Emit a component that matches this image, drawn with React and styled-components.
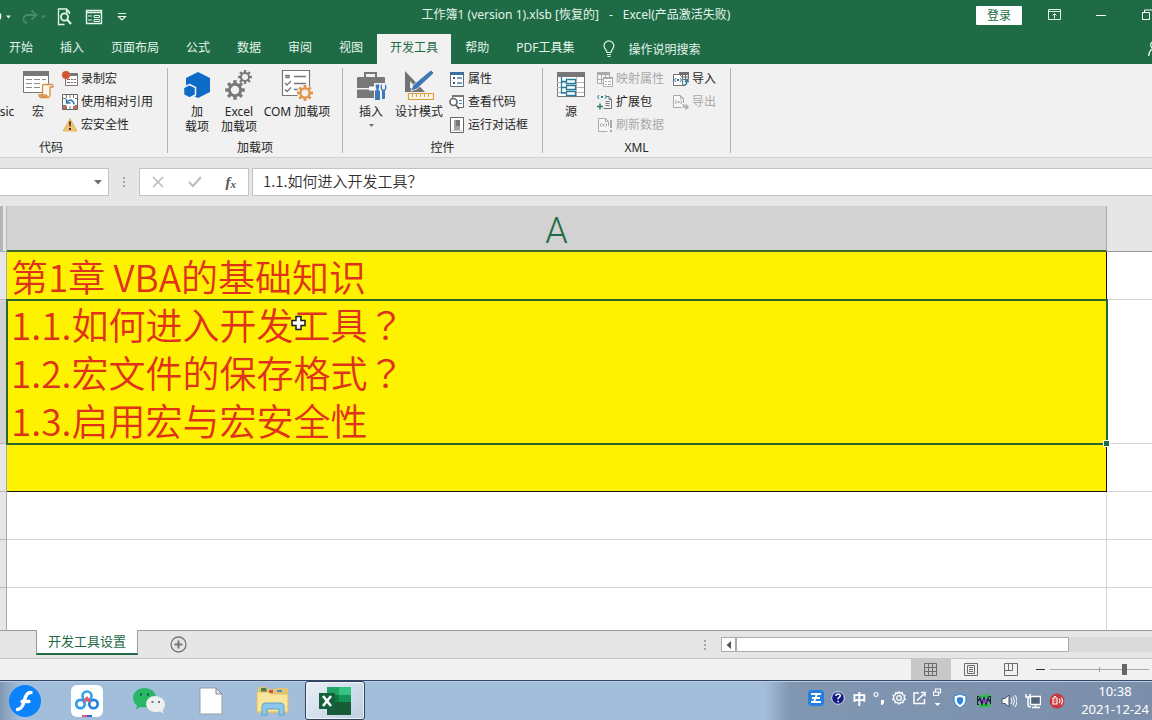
import * as React from 'react';
import styled, { createGlobalStyle, css } from 'styled-components';

const GREEN = '#1e6b45';

const GlobalStyle = createGlobalStyle`
  * {
    box-sizing: border-box;
  }

  body {
    margin: 0;
    overflow: hidden;
    font-family: "Noto Sans", "Noto Sans CJK SC", sans-serif;
    font-size: 12px;
    line-height: 15px;
    color: #262626;
  }

  button, input {
    font: inherit;
    color: inherit;
    margin: 0;
    padding: 0;
    border: 0;
    background: none;
  }

  svg {
    display: block;
    flex-shrink: 0;
  }
`;

/* ---------- quick access and window icons ---------- */

const UndoIcon = () => (
  <svg width="12" height="16" viewBox="0 0 12 16" fill="none">
    <path d="M0 4.500q1.500 3-.5 6" stroke="#fff" strokeWidth="1.500" />
    <path d="M6 6.500h5l-2.500 3z" fill="#e4f5ec" />
  </svg>
);

const RedoIcon = () => (
  <svg width="26" height="16" viewBox="0 0 26 16" fill="none">
    <path d="M5 14q-4-1-3.500-4.500T6 6h8M9.500 1.500 14.500 6l-5 4.500" stroke="#478a68" strokeWidth="1.800" />
    <path d="M19 6.500h5l-2.500 3z" fill="#478a68" />
  </svg>
);

const PreviewIcon = () => (
  <svg width="16" height="18" viewBox="0 0 16 18" fill="none" stroke="#e4f5ec" strokeWidth="1.300">
    <path d="M12.500 6V4L9.500 1H1.500v15.500h6M9.500 1v3h3" />
    <circle cx="7.500" cy="9" r="3.600" strokeWidth="1.800" />
    <path d="m10 11.500 4 4.500" strokeWidth="2.200" />
  </svg>
);

const FormIcon = () => (
  <svg width="18" height="16" viewBox="0 0 18 16" fill="none" stroke="#e4f5ec">
    <path d="M1.500 1.500h15v13h-15zM1 3.500h16" strokeWidth="1.400" />
    <path d="M3 7h4M3 11h4M9 6.500h5.500v2H9zM9 10.500h5.500v2H9z" />
  </svg>
);

const CustomizeIcon = () => (
  <svg width="10" height="10" viewBox="0 0 10 10" fill="none" stroke="#e4f5ec" strokeWidth="1.200">
    <path d="M1 1.500h8M1.500 4.500h7L5 8z" />
  </svg>
);

const RibbonToggleIcon = () => (
  <svg width="14" height="12" viewBox="0 0 14 12" fill="none" stroke="#e4f5ec">
    <path d="M.5.500h12v10H.5zM.5 2.500h12M6.500 9.500V5M4.500 6.500l2-2 2 2" />
  </svg>
);

const MinimizeIcon = () => (
  <svg width="12" height="12" viewBox="0 0 12 12" stroke="#fff">
    <path d="M1 6.500h10" />
  </svg>
);

const RestoreIcon = () => (
  <svg width="10" height="12" viewBox="0 0 10 12" fill="none" stroke="#fff">
    <path d="M.5 3.500h7v7h-7zM2.500 3V1H12" />
  </svg>
);

const BulbIcon = () => (
  <svg width="14" height="18" viewBox="0 0 14 18" fill="none" stroke="#e4f5ec" strokeWidth="1.200">
    <path d="M5 12.500C5 10 2 9 2 5.800a4.900 4.900 0 0 1 9.800 0C11.800 9 9 10 9 12.500zM5 14.500h4M5.500 16.500h3" />
  </svg>
);

const PersonIcon = () => (
  <svg width="4" height="16" viewBox="0 0 4 16" fill="none" stroke="#e4f5ec" strokeWidth="1.300">
    <path d="M4 1Q1.500 4 4 7M4 8Q1 10 .7 15" />
  </svg>
);

/* ---------- ribbon icons ---------- */

const MacroIcon = () => (
  <svg width="32" height="32" viewBox="0 0 32 32" fill="none">
    <path d="M1.500 2.500h25v21h-25z" fill="#fff" stroke="#777" />
    <path d="M1 2h26v5H1z" fill="#777" />
    <path d="M4 10.500h6M12 10.500h6M20 10.500h4M4 14.500h6M12 14.500h6M4 18.500h6M12 18.500h6" stroke="#8d8d8d" />
    <path d="M20.500 17q0-1.500 1.500-1.500h8q1 .5 1 2.500h-3v8.500q-.3 2-2 2h-7.500q-1.500-.5-1.500-2.500h3.500z" fill="#fdf6ee" stroke="#d98b42" strokeWidth="1.300" />
    <path d="M17.500 25.500h7.500q.5 1.500 1 3h-7z" fill="#dd9450" />
  </svg>
);

const RecordIcon = () => (
  <svg width="16" height="16" viewBox="0 0 16 16" fill="none">
    <path d="M3.500 2.500h12v12h-12z" fill="#fff" stroke="#777" />
    <path d="M8 2h8v3H8z" fill="#777" />
    <path d="M5 8.500h3M9 8.500h2M12 8.500h2M5 11.500h3M9 11.500h2M12 11.500h2" stroke="#8b5f5a" />
    <circle cx="4" cy="4" r="4" fill="#d35230" />
  </svg>
);

const RelativeIcon = () => (
  <svg width="16" height="16" viewBox="0 0 16 16" fill="none">
    <path d="M.5.500h15v15H.5z" fill="#fff" stroke="#666" />
    <path d="M.5 4.500h15M.5 11.500h15M4.500.500v15M11.500.500v15M8 1v3M8 12v3" stroke="#777" />
    <path d="M4 4h9v8H4z" fill="#fff" />
    <path d="M5 8.500q4-6 7.500 2M4.500 5v4h4" stroke="#3b78b8" strokeWidth="1.500" />
    <path d="M1 12h3v3H1zM12 12h3v3h-3z" fill="#c56d50" />
  </svg>
);

const WarningIcon = () => (
  <svg width="16" height="16" viewBox="0 0 16 16">
    <path d="M8 1.500 15 14H1z" fill="#f2c274" stroke="#e8b565" strokeLinejoin="round" />
    <path d="M7 4.500h2l-.4 5H7.400zM7 11h2v2H7z" fill="#3a3226" />
  </svg>
);

const AddinIcon = () => (
  <svg width="30" height="32" viewBox="0 0 30 32">
    <path d="m16 3 12 6v14l-12 6-12-6V9z" fill="#0d6ac6" />
    <path d="m7.500 15.500 6 3v7.500l-6 3-6-3v-7.500z" fill="#0d6ac6" stroke="#f1f1f1" strokeWidth="1.500" />
  </svg>
);

const gearTeeth = [0, 45, 90, 135, 180, 225, 270, 315];

const Gear = ({ cx, cy, r, color }) => (
  <g transform={ `translate(${cx} ${cy})` } fill={ color }>
    {gearTeeth.map(angle => (
      <rect key={ angle } x={ -r * 0.17 } y={ -r } width={ r * 0.34 } height={ r * 0.4 } transform={ `rotate(${angle})` }/>
    ))}
    <circle r={ r * 0.58 } fill="none" stroke={ color } strokeWidth={ r * 0.3 }/>
  </g>
);

const ExcelAddinIcon = () => (
  <svg width="32" height="32" viewBox="0 0 32 32">
    <Gear cx={ 12 } cy={ 21 } r={ 9.800 } color="#797979"/>
    <Gear cx={ 22 } cy={ 8 } r={ 7 } color="#797979"/>
  </svg>
);

const ComAddinIcon = () => (
  <svg width="32" height="32" viewBox="0 0 32 32" fill="none">
    <path d="M1.500 1.500h27v25h-27z" fill="#fff" stroke="#777" strokeWidth="1.200" />
    <path d="M5 6.500h3v2H5zM4 14l2 2 4-4M4 20.500l2 2 4-4M13 7.500h12M13 14.500h12M13 20.500h5" stroke="#777" strokeWidth="1.300" />
    <circle cx="24" cy="24" r="8" fill="#f1f1f1" />
    <Gear cx={ 24 } cy={ 24 } r={ 8 } color="#e3954c"/>
  </svg>
);

const ToolboxIcon = () => (
  <svg width="32" height="32" viewBox="0 0 32 32" fill="none">
    <path d="M10 8V4h11v4" stroke="#777" strokeWidth="2" />
    <path d="M3 8h26q1 0 1 1v10H2V9q0-1 1-1zM2 20.500h28V29H2z" fill="#787878" />
    <path d="M14 17.500h5v4h-5z" fill="#fff" />
    <path d="M19 14h13v18H19z" fill="#f1f1f1" />
    <path d="M20.500 15.500h4l-1 6h1.500V31h-5v-9.500H21.500zM27 15v4.500l1.500 1.500 1.500-1.500V15q3 3 0 7v7.500q-1.500 1.500-3 0V22q-3-4 0-7z" fill="#3d79ba" />
  </svg>
);

const DesignIcon = () => (
  <svg width="32" height="32" viewBox="0 0 32 32" fill="none">
    <path d="M2 2v21h20zM7 12l6 7H7z" fill="#737373" fillRule="evenodd" />
    <path d="m28 1 3 3-17 16-6 2 2-6z" fill="#3f76b5" stroke="#f1f1f1" strokeWidth=".8" />
    <path d="M5.500 24.500h25v6h-25z" fill="#fdf5e2" stroke="#daa046" strokeWidth="1.200" />
    <path d="M9.500 25v3M13.500 25v3M17.500 25v3M21.500 25v3M25.500 25v3" stroke="#daa046" />
  </svg>
);

const PropertiesIcon = () => (
  <svg width="16" height="16" viewBox="0 0 16 16" fill="none">
    <path d="M1.500 1.500h13v14h-13z" fill="#fff" stroke="#5f6f82" />
    <path d="M1 1h14v3H1z" fill="#3d6f9f" />
    <path d="M4 6h2v2H4zM4 11h2v2H4z" fill="#555" />
    <path d="M8 7h5M8 12h5" stroke="#4482b8" strokeWidth="1.500" />
  </svg>
);

const ViewCodeIcon = () => (
  <svg width="16" height="16" viewBox="0 0 16 16" fill="none" stroke="#686868">
    <path d="M3.500 4V1.500h11v12H9" fill="#fff" />
    <path d="M3 1h12v2H3z" fill="#777" stroke="none" />
    <path d="M10 6.500h3M10 9.500h3" stroke="#5188b5" />
    <circle cx="4.500" cy="8" r="3.500" fill="#fff" strokeWidth="1.700" />
    <path d="m7 11 3 4" strokeWidth="2" />
  </svg>
);

const DialogIcon = () => (
  <svg width="16" height="16" viewBox="0 0 16 16" fill="none">
    <path d="M1.500.500h13v15h-13z" fill="#fff" stroke="#666" />
    <path d="M5 3h6v10H5z" fill="#a3a3a3" />
    <path d="M7 3h4v6H7z" fill="#777" />
    <path d="M3 13.500h10" stroke="#ccc" />
  </svg>
);

const SourceIcon = () => (
  <svg width="30" height="30" viewBox="0 0 30 30" fill="none">
    <path d="M1.500 2.500h27v24h-27z" fill="#fff" stroke="#777" />
    <path d="M1 2h28v5H1z" fill="#777" />
    <path d="M20.500 7v19M1 12.500h27M1 17.500h27M1 22.500h27" stroke="#b5b5b5" />
    <path d="M5.500 7v16h5M5.500 11.500h5M5.500 17.500h5" stroke="#287d98" strokeWidth="1.300" />
    <path d="M10.500 9.500h9v4h-9zM10.500 15.500h9v4h-9zM10.500 21.500h9v4h-9z" fill="#fff" stroke="#287d98" strokeWidth="1.300" />
  </svg>
);

const MapPropsIcon = () => (
  <svg width="16" height="16" viewBox="0 0 16 16" fill="none" stroke="#aaa">
    <path d="M.5 1.500h12v11H.5zM4.500 4v8M8.500 4v3M1 8.500h5" fill="#f7f7f7" />
    <path d="M0 1h13v3H0z" fill="#aaa" stroke="none" />
    <path d="M6.500 6.500h9v9h-9zM8 10.500h2M11 10.500h3M8 13.500h2M11 13.500h3" fill="#fff" />
    <path d="M6 6h10v2H6z" fill="#aaa" stroke="none" />
  </svg>
);

const ExpansionIcon = () => (
  <svg width="16" height="16" viewBox="0 0 16 16" fill="none">
    <path d="M9 2.500h3l2.500 3v9h-8M12 2.500v3h3M8.500 7.500h4M8.500 9.500h4M8.500 11.500h4" stroke="#777" />
    <path d="M2 1 .5 3 2 5M8 1l1.500 2L8 5" stroke="#2e7897" />
    <path d="M4 2h2v2H4z" fill="#2e7897" />
    <path d="M3 9.500v6M0 12.500h6" stroke="#36865c" strokeWidth="1.600" />
  </svg>
);

const RefreshIcon = () => (
  <svg width="16" height="16" viewBox="0 0 16 16" fill="none" stroke="#aaa">
    <path d="M10.500 14.500h-9v-13h7l3 3V9M8.500 1.500v3h3M4.500 6 3 8l1.500 2M8.500 6 10 8l-1.500 2" fill="#f7f7f7" />
    <path d="M5.500 7h2v2h-2zM13 3h2v8h-2zM13 13h2v2h-2z" fill="#aaa" stroke="none" />
  </svg>
);

const ImportIcon = () => (
  <svg width="16" height="16" viewBox="0 0 16 16" fill="none">
    <path d="M6 1.500h9.500v7H10M6 3.500h9M6 6h9M9.500 2v6M12.500 2v6" stroke="#707070" />
    <path d="M6 1h10v2H6z" fill="#707070" />
    <path d="M.5 3.500h6l3 3v8h-9z" fill="#fff" stroke="#707070" />
    <path d="m3 7-1.500 2L3 11M7 7l1.500 2L7 11" stroke="#2e7897" />
    <path d="M4 8h2v2H4z" fill="#2e7897" />
    <path d="M10 14.500q4 0 4-5M12 11l2-2.500L16 11" stroke="#2e7897" strokeWidth="1.400" />
  </svg>
);

const ExportIcon = () => (
  <svg width="16" height="16" viewBox="0 0 16 16" fill="none" stroke="#aaa">
    <path d="M8.500 13.500h-8v-12h7l3 3V9M7.500 1.500v3h3M3.500 6 2 8l1.500 2M7.500 6 9 8l-1.500 2" fill="#f7f7f7" />
    <path d="M4.500 7h2v2h-2z" fill="#aaa" stroke="none" />
    <path d="M10.500 10v3h4M12.500 10.500 15 13l-2.500 2.500" strokeWidth="1.500" />
  </svg>
);

/* ---------- formula bar icons ---------- */

const Caret = () => (
  <svg width="8" height="5" viewBox="0 0 8 5">
    <path d="M0 0h8L4 4.500z" fill="#707070" />
  </svg>
);

const SmallCaret = () => (
  <svg width="5" height="4" viewBox="0 0 5 4">
    <path d="M0 0h5L2.500 3z" fill="#707070" />
  </svg>
);

const Dots = () => (
  <svg width="3" height="12" viewBox="0 0 3 12" fill="#a6a6a6">
    <path d="M0 1h2v2H0zM0 5h2v2H0zM0 9h2v2H0z" />
  </svg>
);

const CancelIcon = () => (
  <svg width="12" height="12" viewBox="0 0 12 12" stroke="#bcbcbc" strokeWidth="1.600">
    <path d="m1 1 10 10M11 1 1 11" />
  </svg>
);

const EnterIcon = () => (
  <svg width="14" height="12" viewBox="0 0 14 12" fill="none" stroke="#bcbcbc" strokeWidth="2">
    <path d="m1 6 4 4 8-9" />
  </svg>
);

/* ---------- status bar icons ---------- */

const NormalViewIcon = () => (
  <svg width="14" height="14" viewBox="0 0 14 14" fill="none" stroke="#6b6b6b">
    <path d="M.5.500h12v12H.5zM4.500.500v12M8.500.500v12M.5 4.500h12M.5 8.500h12" />
  </svg>
);

const PageLayoutIcon = () => (
  <svg width="14" height="14" viewBox="0 0 14 14" fill="none" stroke="#6b6b6b">
    <path d="M.5.500h13v12H.5zM3.500 2.500h7v8h-7zM5 4.500h4M5 6.500h4M5 8.500h4" />
  </svg>
);

const PageBreakIcon = () => (
  <svg width="14" height="14" viewBox="0 0 14 14" fill="none" stroke="#6b6b6b">
    <path d="M.5.500h13v12H.5zM4.500.500v7M8.500.500v7M.5 7.500h8" />
  </svg>
);

const AddSheetIcon = () => (
  <svg width="17" height="17" viewBox="0 0 17 17" fill="none" stroke="#777">
    <circle cx="8.500" cy="8.500" r="7.500" strokeWidth="1.300" />
    <path d="M8.500 4.500v8M4.500 8.500h8" strokeWidth="2" />
  </svg>
);

const LeftArrow = () => (
  <svg width="5" height="8" viewBox="0 0 5 8">
    <path d="M5 0v8L.5 4z" fill="#555" />
  </svg>
);

/* ---------- taskbar icons ---------- */

const FlashIcon = () => (
  <svg width="32" height="32" viewBox="0 0 32 32" fill="none">
    <circle cx="16" cy="16" r="16" fill="#0a83fb" />
    <path d="M22 7.500Q17.500 7 15.500 15 13.500 24 8.500 24.500M13 16.500h7" stroke="#fff" strokeWidth="3.400" strokeLinecap="round" />
  </svg>
);

const CloudDiskIcon = () => (
  <svg width="32" height="32" viewBox="0 0 32 32" fill="none">
    <rect width="32" height="32" rx="6" fill="#fff" />
    <circle cx="16" cy="11" r="4.500" stroke="#37a5ec" strokeWidth="2.700" />
    <circle cx="9.500" cy="19" r="4.200" stroke="#269eea" strokeWidth="2.700" />
    <circle cx="22.500" cy="19" r="4.200" stroke="#2184e5" strokeWidth="2.700" />
    <path d="m12.500 17 3.500-4 3.500 4" stroke="#ef5969" strokeWidth="2.600" />
    <path d="M11 30h5v2h-5z" fill="#e65370" />
    <path d="M16 30h5v2h-5z" fill="#3465cf" />
  </svg>
);

const ChatIcon = () => (
  <svg width="34" height="28" viewBox="0 0 34 28">
    <path d="M12.500 1C5.500 1 1 5.500 1 11q0 4.500 4 7.500l-1 4 4.500-2.500q13 2 15.500-9Q23 1 12.500 1z" fill="#29b765" />
    <path d="M23.500 9Q32 10 33 17q0 4-2.500 6l1 3.500-3.500-2q-12 2.500-14-7Q14.500 9 23.500 9z" fill="#eef0f0" />
    <path d="M8 6h2v3H8zM15 6h2v3h-2z" fill="#1b713f" />
    <path d="M19.500 14h2v2h-2zM26 14h2v2h-2z" fill="#777" />
  </svg>
);

const DocumentIcon = () => (
  <svg width="24" height="28" viewBox="0 0 24 28">
    <path d="M1 1h16l6 6v20H1z" fill="#fdfdfd" stroke="#999fa7" />
    <path d="M17 1v6h6z" fill="#e2e5e9" stroke="#838c96" />
  </svg>
);

const FolderIcon = () => (
  <svg width="34" height="30" viewBox="0 0 34 30" fill="none">
    <path d="M2 3q0-2 2-2h6l2 2h8l1-1h10l1 2v23H2z" fill="#e6c36f" />
    <path d="M5 2h5l1 4H5z" fill="#497f4b" />
    <path d="M13 4h4v3h-4z" fill="#cd5543" />
    <path d="M21 4h5v2h-5z" fill="#4a8ac3" />
    <path d="M1 6h11l3 2h17v18H1z" fill="#fae69a" stroke="#dfbd64" />
    <path d="M6 29V20q0-3 4-3h14q4 0 4 3v9h-5v-6H11v6z" fill="#8bc8e9" stroke="#5ca1cd" />
  </svg>
);

const ExcelIcon = () => (
  <svg width="32" height="30" viewBox="0 0 32 30">
    <path d="M8 1h24v28H8z" fill="#185c37" />
    <path d="M8 1h12v8H8zM8 9h12v6H8z" fill="#21a366" />
    <path d="M20 1h12v8H20z" fill="#33c481" />
    <path d="M20 9h12v7H20z" fill="#149456" />
    <path d="M8 9h12v7H8z" fill="#107c41" />
    <path d="M0 7h16v16H0z" fill="#11623c" />
    <path d="m4 10 8 10M12 10 4 20" stroke="#fff" strokeWidth="2.600" />
  </svg>
);

const ImeLogoIcon = () => (
  <svg width="16" height="18" viewBox="0 0 16 18" fill="none">
    <rect y="1" width="16" height="16" rx="4" fill="#257fde" />
    <path d="M3 5h10M4 9h8M3 13h10M9 5l-3 8" stroke="#fff" strokeWidth="2" />
  </svg>
);

const HelpIcon = () => (
  <svg width="14" height="14" viewBox="0 0 14 14" fill="none">
    <circle cx="7" cy="7" r="6.300" fill="#151b85" stroke="#d8e1ee" />
    <path d="M4.800 5q.2-2 2.300-2 2.200 0 2.200 1.800 0 1.200-2.200 2.500v1M7.100 9.800v1.500" stroke="#fff" strokeWidth="1.500" />
  </svg>
);

const PunctuationIcon = () => (
  <svg width="12" height="14" viewBox="0 0 12 14" fill="none">
    <circle cx="3" cy="3.500" r="2" stroke="#fff" strokeWidth="1.200" />
    <path d="M8 9h3v3l-2 2H8z" fill="#fff" />
  </svg>
);

const SettingsIcon = () => (
  <svg width="14" height="14" viewBox="0 0 14 14" fill="none" stroke="#fff" strokeWidth="1.300">
    <path d="M7 .7 8.200 2.400 10.300 1.600 10.700 3.800 12.900 4.400 12 6.500 13.200 8.300 11.200 9.300 10.900 11.500 8.700 11.400 7 13 5.300 11.400 3.100 11.500 2.800 9.300.8 8.300 2 6.500 1.100 4.400 3.300 3.800 3.700 1.600 5.800 2.400z" />
    <circle cx="7" cy="7" r="2.300" />
  </svg>
);

const PopOutIcon = () => (
  <svg width="13" height="14" viewBox="0 0 13 14" fill="none" stroke="#fff" strokeWidth="1.500">
    <path d="M6 2H1v10.500h10.500V8M4 9.500 11 3M8 1.500h4v4" />
  </svg>
);

const RestoreDownIcon = () => (
  <svg width="9" height="20" viewBox="0 0 9 20" fill="none" stroke="#fff">
    <path d="M.5 4h5v3.500h-5zM2.500 3.500V1h5v4h-2" strokeWidth="1.200" />
    <path d="M1.500 15h6l-3 3z" fill="#fff" stroke="none" />
  </svg>
);

const ShieldIcon = () => (
  <svg width="14" height="16" viewBox="0 0 14 16">
    <path d="m7 1 6 2v5q0 4-6 7-6-3-6-7V3z" fill="#f6fbff" stroke="#277bd0" />
    <path d="m7 4 3 1v3q0 2-3 4-3-2-3-4V5z" fill="#2d83dd" />
  </svg>
);

const MeterIcon = () => (
  <svg width="18" height="16" viewBox="0 0 18 16" fill="none">
    <path d="M4 2h4v3H4zM10 1h4v4h-4zM4 11h11v3H4z" fill="#24c93b" />
    <path d="M2.500 3v9M2 3.500h2M2 11.500h2M15.500 3v8M13.500 3.500h2" stroke="#102d1a" />
    <path d="m3 8 2-3 2 6 2-6 2 6 2-6 2 4" stroke="#24204f" strokeWidth="1.600" />
    <path d="M8 7h3v3H8z" fill="#a03eaa" />
  </svg>
);

const VolumeIcon = () => (
  <svg width="16" height="16" viewBox="0 0 16 16" fill="none" stroke="#fff">
    <path d="M1 5.500h3L8 2v12L4 10.500H1z" fill="#f7f7f7" stroke="#4b5566" />
    <path d="M10 5q2 3 0 6M12 3.500q3 4.500 0 9M14 2q4 6 0 12" />
  </svg>
);

const NetworkIcon = () => (
  <svg width="16" height="16" viewBox="0 0 16 16" fill="none" stroke="#fff">
    <path d="M5.500 3.500h10v8h-10z" fill="#53657a" strokeWidth="1.400" />
    <path d="M7 14.500h8M10.500 12v2M1 1v3h4V1M3 4v8q0 2 3 2" strokeWidth="1.500" />
  </svg>
);

const RecorderIcon = () => (
  <svg width="16" height="16" viewBox="0 0 16 16" fill="none">
    <circle cx="8" cy="8" r="7.500" fill="#c9383d" />
    <path d="M4 5h4v6H4zM5 3.500h2M5.500 8h1M10 6q2 2 0 4M12 4.500q3 3.500 0 7" stroke="#fff" strokeWidth="1.100" />
  </svg>
);

const CursorIcon = () => (
  <svg width="17" height="16" viewBox="0 0 17 16">
    <path d="M6 1.500h5v4h4v5h-4v4H6v-4H2v-5h4z" fill="#fff" stroke="#1c1c1c" strokeWidth="1.500" />
  </svg>
);

/* ---------- data ---------- */

const tabs = ['开始', '插入', '页面布局', '公式', '数据', '审阅', '视图', '开发工具', '帮助', 'PDF工具集'];

const taskbarApps = [
  { name: 'Flash', Icon: FlashIcon },
  { name: '网盘', Icon: CloudDiskIcon },
  { name: '微信', Icon: ChatIcon },
  { name: '文档', Icon: DocumentIcon },
  { name: '资源管理器', Icon: FolderIcon },
  { name: 'Excel', Icon: ExcelIcon, active: true }
];

const sheetRows = [
  { id: 1, lines: [{ text: '第1章 VBA的基础知识' }], filled: true },
  {
    id: 2,
    lines: [
      { text: '1.1.如何进入开发工具', mark: '？' },
      { text: '1.2.宏文件的保存格式', mark: '？' },
      { text: '1.3.启用宏与宏安全性' }
    ],
    filled: true,
    selected: true
  },
  { id: 3, lines: [], filled: true },
  { id: 4, lines: [] },
  { id: 5, lines: [] },
  { id: 6, lines: [] }
];

/* ---------- parts ---------- */

const Large = ({ icon, lines, menu, width }) => (
  <LargeButton type="button" $width={ width }>
    <LargeIcon>{icon}</LargeIcon>
    {lines.map(line => <span key={ line }>{line}</span>)}
    {menu && <MenuMark><SmallCaret/></MenuMark>}
  </LargeButton>
);

const Small = ({ icon, children, disabled }) => (
  <SmallButton type="button" disabled={ disabled }>
    {icon}
    <span>{children}</span>
  </SmallButton>
);

const TitleBar = () => (
  <StyledTitleBar>
    <QuickAccess>
      <PlainButton type="button" aria-label="撤消"><UndoIcon/></PlainButton>
      <PlainButton type="button" aria-label="恢复"><RedoIcon/></PlainButton>
      <PlainButton type="button" aria-label="打印预览"><PreviewIcon/></PlainButton>
      <PlainButton type="button" aria-label="记录单"><FormIcon/></PlainButton>
      <PlainButton type="button" aria-label="自定义"><CustomizeIcon/></PlainButton>
    </QuickAccess>
    <Title>
      <span>工作簿1 (version 1).xlsb [恢复的]</span>
      <span>-</span>
      <span>Excel(产品激活失败)</span>
    </Title>
    <WindowControls>
      <LoginButton type="button">登录</LoginButton>
      <PlainButton type="button" aria-label="功能区显示选项"><RibbonToggleIcon/></PlainButton>
      <PlainButton type="button" aria-label="最小化"><MinimizeIcon/></PlainButton>
      <PlainButton type="button" aria-label="还原"><RestoreIcon/></PlainButton>
    </WindowControls>
  </StyledTitleBar>
);

const TabBar = () => (
  <StyledTabBar>
    {tabs.map(tab => (
      <TabButton key={ tab } type="button" $active={ tab === '开发工具' }>{tab}</TabButton>
    ))}
    <SearchButton type="button"><BulbIcon/>操作说明搜索</SearchButton>
    <ShareButton type="button" aria-label="共享"><PersonIcon/></ShareButton>
  </StyledTabBar>
);

const Ribbon = () => (
  <StyledRibbon>
    <CodeGroup>
      <GroupBody>
        <Large lines={ ['sic'] } width={ 14 }/>
        <Large icon={ <MacroIcon/> } lines={ ['宏'] } width={ 48 }/>
        <SmallList>
          <Small icon={ <RecordIcon/> }>录制宏</Small>
          <Small icon={ <RelativeIcon/> }>使用相对引用</Small>
          <Small icon={ <WarningIcon/> }>宏安全性</Small>
        </SmallList>
      </GroupBody>
      <GroupName>代码</GroupName>
    </CodeGroup>
    <Group>
      <GroupBody>
        <Large icon={ <AddinIcon/> } lines={ ['加', '载项'] } width={ 42 }/>
        <Large icon={ <ExcelAddinIcon/> } lines={ ['Excel', '加载项'] } width={ 42 }/>
        <Large icon={ <ComAddinIcon/> } lines={ ['COM 加载项'] } width={ 74 }/>
      </GroupBody>
      <GroupName>加载项</GroupName>
    </Group>
    <ControlsGroup>
      <GroupBody>
        <Large icon={ <ToolboxIcon/> } lines={ ['插入'] } width={ 48 } menu/>
        <Large icon={ <DesignIcon/> } lines={ ['设计模式'] } width={ 48 }/>
        <SmallList $inset={ 6 }>
          <Small icon={ <PropertiesIcon/> }>属性</Small>
          <Small icon={ <ViewCodeIcon/> }>查看代码</Small>
          <Small icon={ <DialogIcon/> }>运行对话框</Small>
        </SmallList>
      </GroupBody>
      <GroupName>控件</GroupName>
    </ControlsGroup>
    <ControlsGroup>
      <GroupBody>
        <Large icon={ <SourceIcon/> } lines={ ['源'] } width={ 48 }/>
        <SmallList $inset={ 2 }>
          <Small icon={ <MapPropsIcon/> } disabled>映射属性</Small>
          <Small icon={ <ExpansionIcon/> }>扩展包</Small>
          <Small icon={ <RefreshIcon/> } disabled>刷新数据</Small>
        </SmallList>
        <SmallList $inset={ 9 }>
          <Small icon={ <ImportIcon/> }>导入</Small>
          <Small icon={ <ExportIcon/> } disabled>导出</Small>
        </SmallList>
      </GroupBody>
      <GroupName>XML</GroupName>
    </ControlsGroup>
  </StyledRibbon>
);

const FormulaBar = () => (
  <StyledFormulaBar>
    <NameBox>
      <NameInput aria-label="名称框"/>
      <Caret/>
    </NameBox>
    <Handle><Dots/></Handle>
    <FormulaButtons>
      <PlainButton type="button" aria-label="取消"><CancelIcon/></PlainButton>
      <PlainButton type="button" aria-label="输入"><EnterIcon/></PlainButton>
      <FunctionButton type="button">f<sub>x</sub></FunctionButton>
    </FormulaButtons>
    <FormulaInput aria-label="编辑栏" defaultValue="1.1.如何进入开发工具？"/>
  </StyledFormulaBar>
);

const Sheet = () => (
  <SheetArea>
    <SheetTable>
      <colgroup>
        <RowHeadCol/>
        <col/>
        <RestCol/>
      </colgroup>
      <thead>
        <tr>
          <Corner/>
          <ColumnHead scope="col">A</ColumnHead>
          <RestHead/>
        </tr>
      </thead>
      <tbody>
        {sheetRows.map(row => (
          <tr key={ row.id }>
            <RowHead $selected={ row.selected }/>
            <Cell $filled={ row.filled } $selected={ row.selected }>
              {row.lines.map(({ text, mark }) => (
                <CellLine key={ text }>{text}{mark && <Mark>{mark}</Mark>}</CellLine>
              ))}
              {row.selected && <Selection/>}
              {row.selected && <FillHandle/>}
              {row.selected && <Cursor><CursorIcon/></Cursor>}
            </Cell>
            <RestCell/>
          </tr>
        ))}
      </tbody>
    </SheetTable>
  </SheetArea>
);

const SheetBar = () => (
  <StyledSheetBar>
    <SheetTab type="button">开发工具设置</SheetTab>
    <AddSheet type="button" aria-label="新工作表"><AddSheetIcon/></AddSheet>
    <ScrollSide>
      <Dots/>
      <ScrollBar>
        <ScrollArrow type="button" aria-label="向左滚动"><LeftArrow/></ScrollArrow>
        <ScrollThumb/>
      </ScrollBar>
    </ScrollSide>
  </StyledSheetBar>
);

const StatusBar = () => (
  <StyledStatusBar>
    <ViewButton type="button" aria-label="普通" $active><NormalViewIcon/></ViewButton>
    <ViewButton type="button" aria-label="页面布局"><PageLayoutIcon/></ViewButton>
    <ViewButton type="button" aria-label="分页预览"><PageBreakIcon/></ViewButton>
    <ZoomOut type="button" aria-label="缩小"/>
    <ZoomSlider type="range" aria-label="显示比例" defaultValue="77"/>
  </StyledStatusBar>
);

const Taskbar = () => (
  <StyledTaskbar>
    <AppList>
      {taskbarApps.map(({ name, Icon, active }) => (
        <AppButton key={ name } type="button" aria-label={ name } $active={ active }><Icon/></AppButton>
      ))}
    </AppList>
    <Tray>
      <ImeTray>
        <ImeLogoIcon/>
        <HelpIcon/>
        <ImeMode>中</ImeMode>
        <PunctuationIcon/>
        <SettingsIcon/>
        <PopOutIcon/>
        <RestoreDownIcon/>
      </ImeTray>
      <SystemTray>
        <ShieldIcon/>
        <MeterIcon/>
        <VolumeIcon/>
        <NetworkIcon/>
        <RecorderIcon/>
      </SystemTray>
      <Clock>
        <span>10:38</span>
        <span>2021-12-24</span>
      </Clock>
    </Tray>
  </StyledTaskbar>
);

const App = () => (
  <Window>
    <GlobalStyle/>
    <TitleBar/>
    <TabBar/>
    <Ribbon/>
    <FormulaBar/>
    <Sheet/>
    <SheetBar/>
    <StatusBar/>
    <Taskbar/>
  </Window>
);

const Window = styled.div`
  display: flex;
  flex-direction: column;
  height: 100vh;
  overflow: hidden;
  background: #fff;
`;

const PlainButton = styled.button`
  display: flex;
  align-items: center;
  justify-content: center;
`;

const StyledTitleBar = styled.header`
  display: grid;
  grid-template-columns: 1fr auto 1fr;
  align-items: center;
  height: 34px;
  flex-shrink: 0;
  background: ${GREEN};
  color: #e4f5ec;
`;

const QuickAccess = styled.div`
  display: flex;
  align-items: center;

  button:nth-child(2) { margin-left: 10px; }
  button:nth-child(3) { margin-left: 9px; }
  button:nth-child(4) { margin-left: 12px; }
  button:nth-child(5) { margin-left: 14px; }
`;

const Title = styled.div`
  display: flex;
  gap: 10px;
  white-space: nowrap;
  padding-bottom: 5px;
`;

const WindowControls = styled.div`
  display: flex;
  align-items: center;
  justify-content: flex-end;
  padding-bottom: 4px;

  button:nth-child(2) { margin-left: 26px; }
  button:nth-child(3) { margin-left: 33px; }
  button:nth-child(4) { margin-left: 35px; }
`;

const LoginButton = styled.button`
  width: 46px;
  height: 19px;
  background: #fff;
  border-radius: 1px;
  color: ${GREEN};
`;

const StyledTabBar = styled.nav`
  display: flex;
  gap: 1px;
  height: 30px;
  flex-shrink: 0;
  background: ${GREEN};
  color: #e4f5ec;

  button:first-child {
    padding-left: 9px;
  }
`;

const TabButton = styled.button`
  padding: 0 13px 3px;
  white-space: nowrap;

  ${({ $active }) => $active && css`
    background: #f1f1f1;
    color: ${GREEN};
  `}
`;

const SearchButton = styled.button`
  display: flex;
  align-items: center;
  gap: 12px;
  margin-left: 14px;
`;

const ShareButton = styled.button`
  margin-left: auto;
`;

const StyledRibbon = styled.section`
  display: flex;
  height: 94px;
  flex-shrink: 0;
  padding: 4px 0;
  background: #f1f1f1;
  border-bottom: 1px solid #d0d0d0;
`;

const Group = styled.div`
  display: flex;
  flex-direction: column;
  justify-content: space-between;
  padding: 0 8px;
  border-right: 1px solid #b4b4b4;
`;

const CodeGroup = styled(Group)`
  padding: 0 14px 0 0;
`;

const ControlsGroup = styled(Group)`
  padding: 0 14px 0 4px;
`;

const GroupBody = styled.div`
  display: flex;
`;

const GroupName = styled.div`
  line-height: 11px;
  text-align: center;

  ${CodeGroup} & {
    padding-right: 51px;
  }

  ${ControlsGroup} & {
    padding-left: 10px;
  }
`;

const LargeButton = styled.button`
  display: flex;
  flex-direction: column;
  align-items: center;
  width: ${({ $width }) => $width}px;
  white-space: nowrap;
`;

const LargeIcon = styled.span`
  display: flex;
  align-items: center;
  height: 34px;
  margin-bottom: 2px;
`;

const MenuMark = styled.span`
  padding-top: 5px;
`;

const SmallList = styled.div`
  display: flex;
  flex-direction: column;
  margin-left: ${({ $inset }) => $inset || 0}px;
`;

const SmallButton = styled.button`
  display: flex;
  align-items: center;
  gap: 3px;
  height: 23px;
  padding-bottom: 2px;
  white-space: nowrap;

  &:disabled {
    color: #a9a9a9;
  }
`;

const StyledFormulaBar = styled.section`
  display: flex;
  height: 48px;
  flex-shrink: 0;
  padding: 10px 0;
  background: #e6e6e6;
`;

const Box = styled.div`
  display: flex;
  align-items: center;
  background: #fff;
  border: 1px solid #c3c3c3;
`;

const NameBox = styled(Box)`
  width: 109px;
  padding-right: 6px;
  border-left: 0;
`;

const NameInput = styled.input`
  flex: 1;
  min-width: 0;
`;

const Handle = styled.div`
  display: flex;
  align-items: center;
  justify-content: center;
  width: 30px;
`;

const FormulaButtons = styled(Box)`
  justify-content: space-between;
  width: 110px;
  padding: 0 12px;
`;

const FunctionButton = styled.button`
  font: italic bold 15px "Liberation Serif", serif;
  color: #555;

  sub {
    font-size: 11px;
    vertical-align: -1px;
  }
`;

const FormulaInput = styled.input`
  flex: 1;
  min-width: 0;
  margin-left: 3px;
  padding: 0 0 4px 10px;
  background: #fff;
  border: 1px solid #c3c3c3;
  border-right: 0;
  font-size: 15px;
  font-family: "Noto Sans CJK SC", sans-serif;
  font-weight: 350;
  color: #333;
`;

const SheetArea = styled.main`
  flex: 1;
  min-height: 0;
  overflow: hidden;
`;

const SheetTable = styled.table`
  width: 100%;
  table-layout: fixed;
  border-collapse: separate;
  border-spacing: 0;

  th, td {
    padding: 0;
  }
`;

const RowHeadCol = styled.col`
  width: 7px;
`;

const RestCol = styled.col`
  width: 45px;
`;

const Corner = styled.td`
  background: linear-gradient(90deg, #b5b5b5 3px, #e6e6e6 3px);
  border-right: 1px solid #b8b8b8;
  border-bottom: 1px solid #a8b0c0;
`;

const ColumnHead = styled.th`
  height: 46px;
  background: #d2d2d2;
  border-right: 1px solid #a9a9a9;
  border-bottom: 2px solid #3f6a24;
  font: 300 36px Roboto, sans-serif;
  color: ${GREEN};

  && {
    padding-top: 6px;
    line-height: 38px;
  }
`;

const RestHead = styled.td`
  background: #e6e6e6;
  border-bottom: 1px solid #9a9a9a;
`;

const RowHead = styled.td`
  height: 48px;
  background: ${({ $selected }) => $selected ? '#d2d2d2' : '#e6e6e6'};
  border-right: 1px solid ${({ $selected }) => $selected ? GREEN : '#a9a9a9'};
  border-bottom: 1px solid #b8b8b8;
`;

/* grid lines are inset shadows so that every row keeps its full 48px */
const Cell = styled.td`
  position: relative;
  z-index: ${({ $selected }) => $selected ? 1 : 0};
  background: ${({ $filled }) => $filled ? '#fff200' : '#fff'};
  box-shadow: ${({ $filled }) => $filled
    ? 'inset -1px -1px #14140a'
    : 'inset -1px -1px #d4d4d4'};
  font-family: "Noto Sans CJK SC", sans-serif;
  font-size: 37px;
  font-weight: 350;
  line-height: 48px;
  color: #e0321a;

  && {
    padding-left: 4px;
  }
`;

const CellLine = styled.div`
  height: 48px;
  white-space: nowrap;
`;

const Mark = styled.span`
  font-family: "Noto Sans CJK TC", sans-serif;
`;

const Selection = styled.span`
  position: absolute;
  inset: -1px;
  border: 2px solid #28662c;
`;

const FillHandle = styled.span`
  position: absolute;
  right: -3px;
  bottom: -3px;
  width: 7px;
  height: 7px;
  background: ${GREEN};
  border: 1px solid #fff;
`;

const Cursor = styled.span`
  position: absolute;
  left: 283px;
  top: 15px;
`;

const RestCell = styled.td`
  border-bottom: 1px solid #d4d4d4;
`;

const StyledSheetBar = styled.section`
  display: flex;
  height: 28px;
  flex-shrink: 0;
  padding-left: 36px;
  background: #e6e6e6;
  border-top: 1px solid #9a9a9a;
`;

const SheetTab = styled.button`
  height: 25px;
  margin-top: -1px;
  padding: 0 11px;
  background: #fff;
  border: solid #9a9a9a;
  border-width: 0 1px;
  border-bottom: 2px solid ${GREEN};
  font-size: 13px;
  color: ${GREEN};
`;

const AddSheet = styled.button`
  margin-left: 32px;
`;

const ScrollSide = styled.div`
  display: flex;
  align-items: center;
  gap: 14px;
  width: 448px;
  margin-left: auto;
`;

const ScrollBar = styled.div`
  display: flex;
  flex: 1;
  height: 15px;
  background: #dadada;
`;

const ScrollArrow = styled.button`
  display: flex;
  align-items: center;
  justify-content: center;
  width: 15px;
  background: #fff;
  border: 1px solid #ababab;
`;

const ScrollThumb = styled.div`
  width: 333px;
  background: #fff;
  border: 1px solid #ababab;
`;

const StyledStatusBar = styled.footer`
  display: flex;
  align-items: center;
  justify-content: flex-end;
  height: 22px;
  flex-shrink: 0;
  padding-right: 3px;
  background: #f1f1f1;
  border-top: 1px solid #c6c6c6;
`;

const ViewButton = styled.button`
  display: flex;
  align-items: center;
  justify-content: center;
  width: 40px;
  height: 100%;
  background: ${({ $active }) => $active ? '#c8c8c8' : 'none'};
`;

const ZoomOut = styled.button`
  width: 9px;
  height: 1px;
  margin: 0 5px;
  background: #333;
`;

const ZoomSlider = styled.input`
  appearance: none;
  width: 99px;
  height: 12px;
  background:
    linear-gradient(#aaa, #aaa) center / 100% 1px no-repeat,
    linear-gradient(#999, #999) center / 1px 5px no-repeat;

  &::-webkit-slider-thumb {
    appearance: none;
    width: 5px;
    height: 11px;
    background: #666;
  }
`;

const StyledTaskbar = styled.footer`
  display: flex;
  justify-content: space-between;
  height: 40px;
  flex-shrink: 0;
  border-top: 1px solid #34486a;
  box-shadow: inset 0 1px #b9cce0;
  background: linear-gradient(90deg, #7f99b5 0, #a3bedb 20px, #a3bedb 765px, #8096b1 790px, #7b8fab 100%);
`;

const AppList = styled.div`
  display: flex;
  gap: 2px;
  margin-left: -5px;
`;

const AppButton = styled.button`
  display: flex;
  align-items: center;
  justify-content: center;
  width: 60px;

  ${({ $active }) => $active && css`
    background: linear-gradient(135deg, #e9eff6, #bdcfe1);
    border: 1px solid #32445c;
    border-radius: 3px;
    box-shadow: inset 0 0 0 1px #eef4fa;
  `}
`;

const Tray = styled.div`
  display: flex;
  align-items: center;
  color: #fff;
`;

const ImeTray = styled.div`
  display: flex;
  align-items: center;
  gap: 7px;
  padding-bottom: 5px;
`;

const ImeMode = styled.span`
  font-size: 14px;
  font-weight: 700;
`;

const SystemTray = styled.div`
  display: flex;
  align-items: center;
  gap: 8px;
  margin-left: 11px;
`;

const Clock = styled.time`
  display: flex;
  flex-direction: column;
  align-items: center;
  gap: 3px;
  margin: 0 3px 0 16px;
  font-size: 13px;
`;

export default App;
